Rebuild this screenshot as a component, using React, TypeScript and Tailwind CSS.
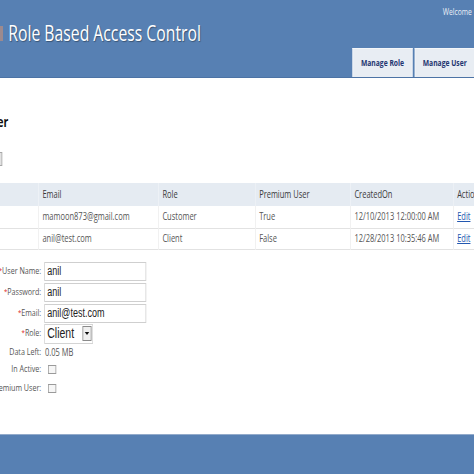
import React from "react";

const labelCls = "w-[55px] shrink-0 flex justify-end whitespace-nowrap text-[9.5px] text-[#555]";

function Req({ text }: { text: string }) {
  return (
    <span>
      <span className="text-[#d22] text-[8px] align-top">*</span>
      {text}
    </span>
  );
}

function Field({ label, value }: { label: string; value: string }) {
  return (
    <div className="flex items-center h-[19px]">
      <div className={labelCls}>
        <Req text={label} />
      </div>
      <div className="ml-[4px] w-[136px] h-[19px] border border-[#cfcfcf] bg-white flex items-center px-[3px] text-[12px] text-[#222] font-['Liberation_Sans',Arial,sans-serif]">
        {value}
      </div>
    </div>
  );
}

function Check() {
  return <div className="ml-[9px] w-[11px] h-[9px] border border-[#9a9a9a] bg-[#f6f6f6]" />;
}

export default function App() {
  const rows = [
    { email: "mamoon873@gmail.com", role: "Customer", premium: "True", created: "12/10/2013 12:00:00 AM" },
    { email: "anil@test.com", role: "Client", premium: "False", created: "12/28/2013 10:35:46 AM" },
  ];
  return (
    <div className="w-[474px] h-[474px] overflow-hidden bg-white">
      <div className="w-[632px] h-[474px] origin-top-left scale-x-75 flex flex-col font-['Open_Sans',Arial,sans-serif]">
        {/* Header */}
        <div className="h-[78px] bg-[#5780b3] flex flex-col border-b border-[#4c73a5]">
          <div className="pt-[6px] pr-[3px] text-right text-[9px] leading-[12px] text-[#e8eef6]">Welcome</div>
          <div className="h-[30px] flex items-center">
            <div className="w-[4px] h-[15px] bg-[#9d8a8e]" />
            <div className="ml-[7px] text-[21px] leading-[30px] text-white [text-shadow:1px_1px_1px_rgba(0,0,0,0.35)]">
              Role Based Access Control
            </div>
          </div>
          <div className="h-[29px] flex justify-end gap-[3px]">
            <div className="w-[80px] bg-[#e8edf3] border-t border-l border-r border-[#f4f6f9] flex items-center justify-center text-[9px] font-bold text-[#1f3670]">
              Manage Role
            </div>
            <div className="w-[79px] bg-[#e8edf3] border-t border-l border-[#f4f6f9] flex items-center justify-center text-[9px] font-bold text-[#1f3670]">
              Manage User
            </div>
          </div>
        </div>

        {/* Content */}
        <div className="flex flex-col">
          <div className="mt-[36px] h-[16px] w-[11px] flex justify-end whitespace-nowrap text-[14px] leading-[16px] font-bold text-[#111]">
            Manage User
          </div>
          <div className="mt-[22px] h-[14px] w-[3px] flex justify-end">
            <div className="shrink-0 w-[60px] h-[14px] bg-[#e2e2e2] border border-[#a8a8a8]" />
          </div>

          <table className="mt-[17px] table-fixed w-[700px] border-collapse text-[10px]">
            <colgroup>
              <col className="w-[51px]" />
              <col className="w-[160px]" />
              <col className="w-[129px]" />
              <col className="w-[127px]" />
              <col className="w-[137px]" />
              <col className="w-[96px]" />
            </colgroup>
            <thead>
              <tr className="h-[23px] bg-[#e5ebf2] text-[#3a3a3a] text-left">
                <th className="font-normal border-r border-[#eef2f6]"></th>
                <th className="font-normal pl-[5px] border-r border-[#eef2f6]">Email</th>
                <th className="font-normal pl-[5px] border-r border-[#eef2f6]">Role</th>
                <th className="font-normal pl-[5px] border-r border-[#eef2f6]">Premium User</th>
                <th className="font-normal pl-[5px] border-r border-[#eef2f6]">CreatedOn</th>
                <th className="font-normal pl-[5px]">Action</th>
              </tr>
            </thead>
            <tbody className="text-[#555]">
              {rows.map((r, i) => (
                <tr key={i} className={`${i === 0 ? "h-[22px]" : "h-[21px]"} border-b border-[#e2e2e2]`}>
                  <td className="border-r border-[#ececec]"></td>
                  <td className="pl-[5px] border-r border-[#ececec]">{r.email}</td>
                  <td className="pl-[5px] border-r border-[#ececec]">{r.role}</td>
                  <td className="pl-[5px] border-r border-[#ececec]">{r.premium}</td>
                  <td className="pl-[5px] border-r border-[#ececec]">{r.created}</td>
                  <td className="pl-[5px]">
                    <span className="text-[#2357b0] underline">Edit</span>
                  </td>
                </tr>
              ))}
            </tbody>
          </table>

          {/* Form */}
          <div className="mt-[12px] flex flex-col">
            <Field label="User Name:" value="anil" />
            <div className="mt-[2px]"><Field label="Password:" value="anil" /></div>
            <div className="mt-[2px]"><Field label="Email:" value="anil@test.com" /></div>
            <div className="mt-[1px] flex items-center h-[20px]">
              <div className={labelCls}>
                <Req text="Role:" />
              </div>
              <div className="ml-[4px] w-[65px] h-[20px] border border-[#d4d4d4] bg-white flex items-center pl-[3px] pr-[1px]">
                <span className="flex-1 text-[14px] text-[#222] font-['Liberation_Sans',Arial,sans-serif]">Client</span>
                <div className="w-[12px] h-[15px] border border-[#8a8a8a] bg-[#f0f0f0] flex items-center justify-center">
                  <div className="w-0 h-0 border-l-[3px] border-r-[3px] border-t-[3px] border-l-transparent border-r-transparent border-t-[#111]" />
                </div>
              </div>
            </div>
            <div className="mt-[2px] h-[14px] flex items-center">
              <div className={labelCls}>Data Left:</div>
              <span className="ml-[5px] text-[10px] text-[#555]">0.05 MB</span>
            </div>
            <div className="mt-[3px] h-[14px] flex items-center">
              <div className={labelCls}>In Active:</div>
              <Check />
            </div>
            <div className="mt-[5px] h-[14px] flex items-center">
              <div className={labelCls}>Premium User:</div>
              <Check />
            </div>
          </div>
        </div>

        {/* Footer */}
        <div className="mt-auto h-[40px] bg-[#5780b3] border-t border-[#93abcb]" />
      </div>
    </div>
  );
}
